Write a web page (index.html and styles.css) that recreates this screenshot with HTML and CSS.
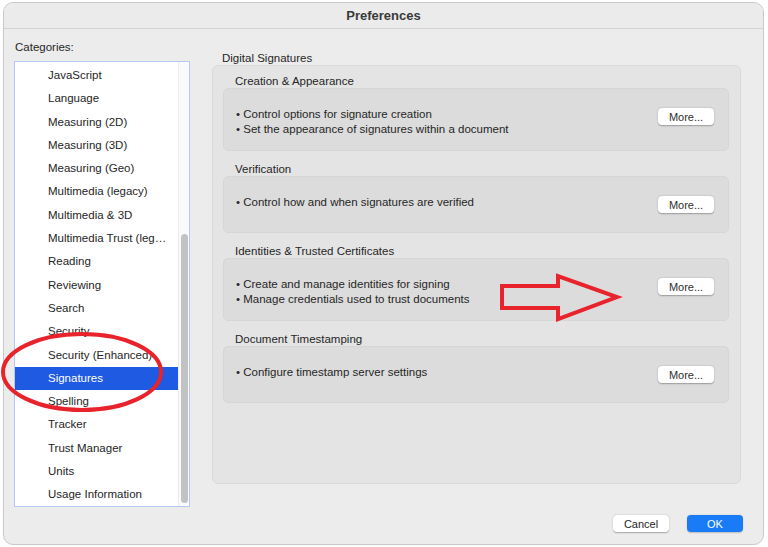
FILE: index.html
```html
<!DOCTYPE html>
<html>

<head>
    <meta charset="UTF-8">
    <title>Preferences</title>
    <link rel="stylesheet" href="styles.css">
</head>

<body>
    <div class="window">
        <div class="title-bar">Preferences</div>

        <div class="main">
            <div class="sidebar">
                <div class="sidebar-label">Categories:</div>
                <div class="category-box">
                    <ul class="category-list">
                        <li>JavaScript</li>
                        <li>Language</li>
                        <li>Measuring (2D)</li>
                        <li>Measuring (3D)</li>
                        <li>Measuring (Geo)</li>
                        <li>Multimedia (legacy)</li>
                        <li>Multimedia &amp; 3D</li>
                        <li>Multimedia Trust (legacy)</li>
                        <li>Reading</li>
                        <li>Reviewing</li>
                        <li>Search</li>
                        <li>Security</li>
                        <li>Security (Enhanced)</li>
                        <li class="selected">Signatures</li>
                        <li>Spelling</li>
                        <li>Tracker</li>
                        <li>Trust Manager</li>
                        <li>Units</li>
                        <li>Usage Information</li>
                    </ul>
                    <div class="scroll-track">
                        <div class="scroll-thumb"></div>
                    </div>
                </div>
            </div>

            <div class="panel">
                <div class="panel-label">Digital Signatures</div>
                <div class="group">
                    <div class="section">
                        <div class="section-title">Creation &amp; Appearance</div>
                        <div class="section-box">
                            <div class="section-text">
                                <div>• Control options for signature creation</div>
                                <div>• Set the appearance of signatures within a document</div>
                            </div>
                            <button class="more-btn">More...</button>
                        </div>
                    </div>

                    <div class="section">
                        <div class="section-title">Verification</div>
                        <div class="section-box">
                            <div class="section-text">
                                <div>• Control how and when signatures are verified</div>
                            </div>
                            <button class="more-btn">More...</button>
                        </div>
                    </div>

                    <div class="section">
                        <div class="section-title">Identities &amp; Trusted Certificates</div>
                        <div class="section-box">
                            <div class="section-text">
                                <div>• Create and manage identities for signing</div>
                                <div>• Manage credentials used to trust documents</div>
                            </div>
                            <button class="more-btn">More...</button>
                        </div>
                    </div>

                    <div class="section">
                        <div class="section-title">Document Timestamping</div>
                        <div class="section-box">
                            <div class="section-text">
                                <div>• Configure timestamp server settings</div>
                            </div>
                            <button class="more-btn">More...</button>
                        </div>
                    </div>
                </div>
            </div>
        </div>

        <div class="footer">
            <button class="button cancel-button">Cancel</button>
            <button class="button ok-button">OK</button>
        </div>
    </div>

    <svg class="markup" width="768" height="547" viewBox="0 0 768 547">
        <ellipse cx="82" cy="372" rx="79" ry="38" fill="none" stroke="#e8232b" stroke-width="4" />
        <polygon points="502,286 558,286 558,276 617,297 558,319 558,308 502,308" fill="none"
            stroke="#e8232b" stroke-width="4" stroke-linejoin="miter" />
    </svg>
</body>

</html>
```

FILE: styles.css
```css
body {
    margin: 0;
    padding: 0;
    background-color: #fff;
    font-family: 'Liberation Sans', Arial, sans-serif;
    font-size: 11.5px;
    color: #262626;
    width: 768px;
    height: 547px;
    position: relative;
    overflow: hidden;
}

.window {
    position: absolute;
    top: 2px;
    left: 3px;
    width: 759px;
    height: 541px;
    background-color: #ececec;
    border: 1px solid #c9c9c9;
    border-radius: 10px;
    display: flex;
    flex-direction: column;
    overflow: hidden;
}

.title-bar {
    height: 25px;
    line-height: 25px;
    text-align: center;
    font-size: 13px;
    font-weight: bold;
    color: #3a3a3a;
    border-bottom: 1px solid #d3d3d3;
    background-color: #ebebeb;
}

.main {
    display: flex;
    padding: 11px 0 0 10px;
    gap: 22px;
}

.sidebar {
    width: 176px;
}

.sidebar-label {
    height: 14px;
    line-height: 14px;
    padding-left: 1px;
    margin-bottom: 7px;
}

.category-box {
    display: flex;
    height: 444px;
    border: 1px solid #b5c8f2;
    background-color: #fff;
}

.category-list {
    list-style: none;
    margin: 0;
    padding: 2px 0 0 0;
    width: 164px;
    overflow: hidden;
}

.category-list li {
    height: 23.3px;
    line-height: 23.3px;
    padding: 0 6px 0 33px;
    white-space: nowrap;
    overflow: hidden;
    text-overflow: ellipsis;
}

.category-list li.selected {
    background-color: #1f5ae2;
    color: #fff;
}

.scroll-track {
    width: 10px;
    border-left: 1px solid #ececec;
    background-color: #fafafa;
}

.scroll-thumb {
    margin: 172px 0 0 2px;
    width: 7px;
    height: 269px;
    border-radius: 4px;
    background-color: #c2c2c2;
}

.panel {
    width: 529px;
    padding-top: 11px;
}

.panel-label {
    height: 14px;
    line-height: 14px;
    padding-left: 10px;
}

.group {
    height: 409px;
    padding: 8px 11px 0 10px;
    background-color: #e4e4e4;
    border: 1px solid #dadada;
    border-radius: 6px;
}

.section {
    margin-bottom: 11px;
}

.section-title {
    height: 14px;
    line-height: 14px;
    padding-left: 12px;
}

.section-box {
    display: flex;
    align-items: flex-start;
    justify-content: space-between;
    box-sizing: border-box;
    min-height: 57px;
    padding: 18px 14px 14px 12px;
    background-color: #dcdcdc;
    border: 1px solid #d6d6d6;
    border-radius: 5px;
}

.section-text {
    line-height: 14.5px;
}

.more-btn {
    width: 56px;
    height: 17px;
    padding: 0;
    margin-top: 1px;
    border: none;
    border-radius: 4px;
    background-color: #fff;
    box-shadow: 0 0.5px 1.5px rgba(0, 0, 0, 0.3);
    font-family: inherit;
    font-size: 11px;
    color: #2e2e2e;
}

.footer {
    display: flex;
    justify-content: flex-end;
    gap: 18px;
    padding: 8px 20px 0 0;
}

.button {
    width: 56px;
    height: 17px;
    padding: 0;
    border: none;
    border-radius: 4px;
    font-family: inherit;
    font-size: 11px;
}

.cancel-button {
    background-color: #fff;
    color: #262626;
    box-shadow: 0 0.5px 1.5px rgba(0, 0, 0, 0.3);
}

.ok-button {
    background-color: #1a7bf6;
    color: #fff;
    box-shadow: 0 0.5px 1.5px rgba(0, 0, 0, 0.2);
}

.markup {
    position: absolute;
    top: 0;
    left: 0;
    pointer-events: none;
}
```
